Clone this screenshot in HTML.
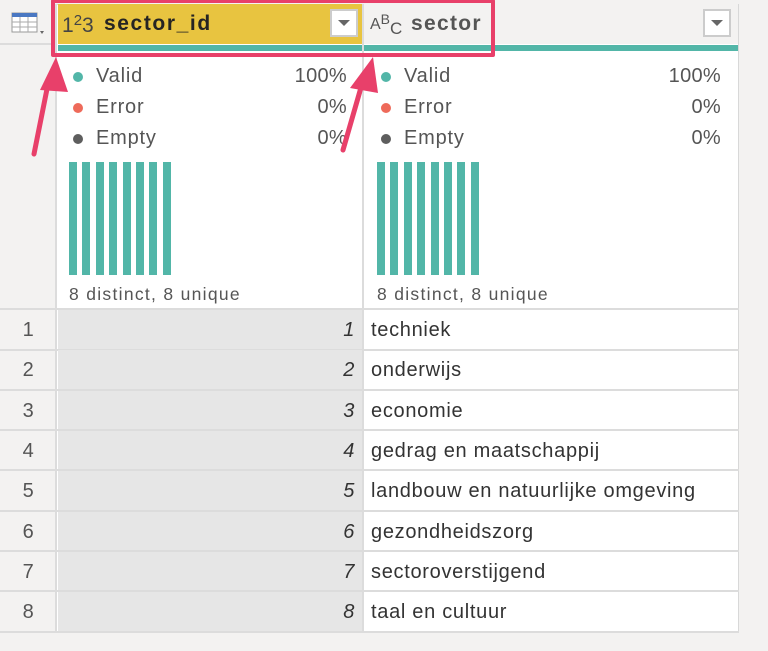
<!DOCTYPE html>
<html><head><meta charset="utf-8"><style>
*{margin:0;padding:0;box-sizing:border-box}
body{width:768px;height:651px;background:#f3f2f1;position:relative;overflow:hidden;font-family:"Liberation Sans",sans-serif;color:#3b3a39}
.a{position:absolute}
.t{font-size:20px;color:#333;letter-spacing:0.6px}
</style></head><body>
<div class="a" style="left:0;top:4px;width:739px;height:629px;background:#fff;border:1px solid #d8d8d8"></div>
<div class="a" style="left:0;top:4px;width:57px;height:629px;background:#f3f2f1;border-right:2px solid #dcdcdc"></div>
<div class="a" style="left:0;top:43px;width:57px;height:2px;background:#dcdcdc"></div>
<div class="a" style="left:58px;top:4px;width:304px;height:40px;background:#e8c440"></div>
<div class="a" style="left:364px;top:4px;width:374px;height:40px;background:#f3f2f1"></div>
<div class="a" style="left:58px;top:45px;width:680px;height:6px;background:#52b6a8"></div>
<div class="a" style="left:362px;top:4px;width:2px;height:628px;background:#dcdcdc"></div>
<svg class="a" style="left:11px;top:12px" width="38" height="26"><rect x="1" y="1" width="25" height="19" fill="#fff" stroke="#999"/><rect x="1" y="1" width="25" height="4" fill="#4a78c2"/><path d="M1 10h25M1 15h25M9 5v15M17 5v15" stroke="#aaa"/><path d="M29 19l4 0l-2 3z" fill="#666"/></svg>
<div class="a" style="left:62px;top:14px;font-size:21px;color:#444;line-height:24px">1<span style="font-size:15px;position:relative;top:-7px">2</span>3</div>
<div class="a" style="left:104px;top:12px;font-size:21px;font-weight:bold;color:#252423;letter-spacing:1.6px">sector_id</div>
<div class="a" style="left:330px;top:9px;width:28px;height:28px;background:#fff;border:2px solid #ccc"></div>
<svg class="a" style="left:337px;top:19px" width="14" height="8"><path d="M1 1h12l-6 6z" fill="#666"/></svg>
<div class="a" style="left:370px;top:14px;font-size:16px;color:#555;line-height:20px">A<span style="font-size:14px;position:relative;top:-5px">B</span><span style="font-size:17px;position:relative;top:5px">C</span></div>
<div class="a" style="left:411px;top:12px;font-size:21px;font-weight:bold;color:#555;letter-spacing:1.3px">sector</div>
<div class="a" style="left:703px;top:9px;width:28px;height:28px;background:#fff;border:2px solid #ccc"></div>
<svg class="a" style="left:710px;top:19px" width="14" height="8"><path d="M1 1h12l-6 6z" fill="#666"/></svg>
<div class="a" style="left:0;top:308px;width:739px;height:2px;background:#dcdcdc"></div>
<div id="p"></div>
<script>
let h='';
const cols=[[69,347],[377,721]];
cols.forEach(([x,r])=>{
 [['Valid','100%','#52b6a8',65],['Error','0%','#ee6a5a',96],['Empty','0%','#5e5e5e',127]].forEach(([l,p,c,y])=>{
  h+=`<div class="a" style="left:${x+4}px;top:${y+7}px;width:10px;height:10px;border-radius:50%;background:${c}"></div>`;
  h+=`<div class="a t" style="left:${x+27}px;top:${y}px;color:#555;letter-spacing:0.8px">${l}</div>`;
  h+=`<div class="a t" style="left:${r-90}px;width:90px;text-align:right;top:${y}px;color:#555;letter-spacing:0.3px">${p}</div>`;
 });
 for(let i=0;i<8;i++)h+=`<div class="a" style="left:${x+i*13.4}px;top:162px;width:8px;height:113px;background:#52b6a8"></div>`;
 h+=`<div class="a" style="left:${x}px;top:284px;font-size:17.5px;color:#555;letter-spacing:1.3px">8 distinct, 8 unique</div>`;
});
const s=['techniek','onderwijs','economie','gedrag en maatschappij','landbouw en natuurlijke omgeving','gezondheidszorg','sectoroverstijgend','taal en cultuur'];
for(let i=0;i<8;i++){
 const y=310+i*40.3;
 h+=`<div class="a" style="left:58px;top:${y}px;width:304px;height:39px;background:#e6e6e6"></div>`;
 h+=`<div class="a" style="left:0;top:${y+38.5}px;width:739px;height:2px;background:#dcdcdc"></div>`;
 h+=`<div class="a t" style="left:0;width:57px;text-align:center;top:${y+9}px;color:#555">${i+1}</div>`;
 h+=`<div class="a t" style="left:200px;width:155px;text-align:right;top:${y+9}px;font-style:italic">${i+1}</div>`;
 h+=`<div class="a t" style="left:371px;top:${y+9}px;letter-spacing:0.7px">${s[i]}</div>`;
}
document.getElementById('p').outerHTML=h;
</script>
<div class="a" style="left:51px;top:-1px;width:444px;height:58px;border:4px solid #e8406a;border-radius:2px"></div>
<svg class="a" style="left:0;top:0" width="768" height="200">
<path d="M34 154L48 84" stroke="#e8406a" stroke-width="5" stroke-linecap="round"/>
<path d="M56 57L40 90L68 92z" fill="#e8406a"/>
<path d="M343 150L362 84" stroke="#e8406a" stroke-width="5" stroke-linecap="round"/>
<path d="M373 57L350 88L378 93z" fill="#e8406a"/>
</svg>
</body></html>
